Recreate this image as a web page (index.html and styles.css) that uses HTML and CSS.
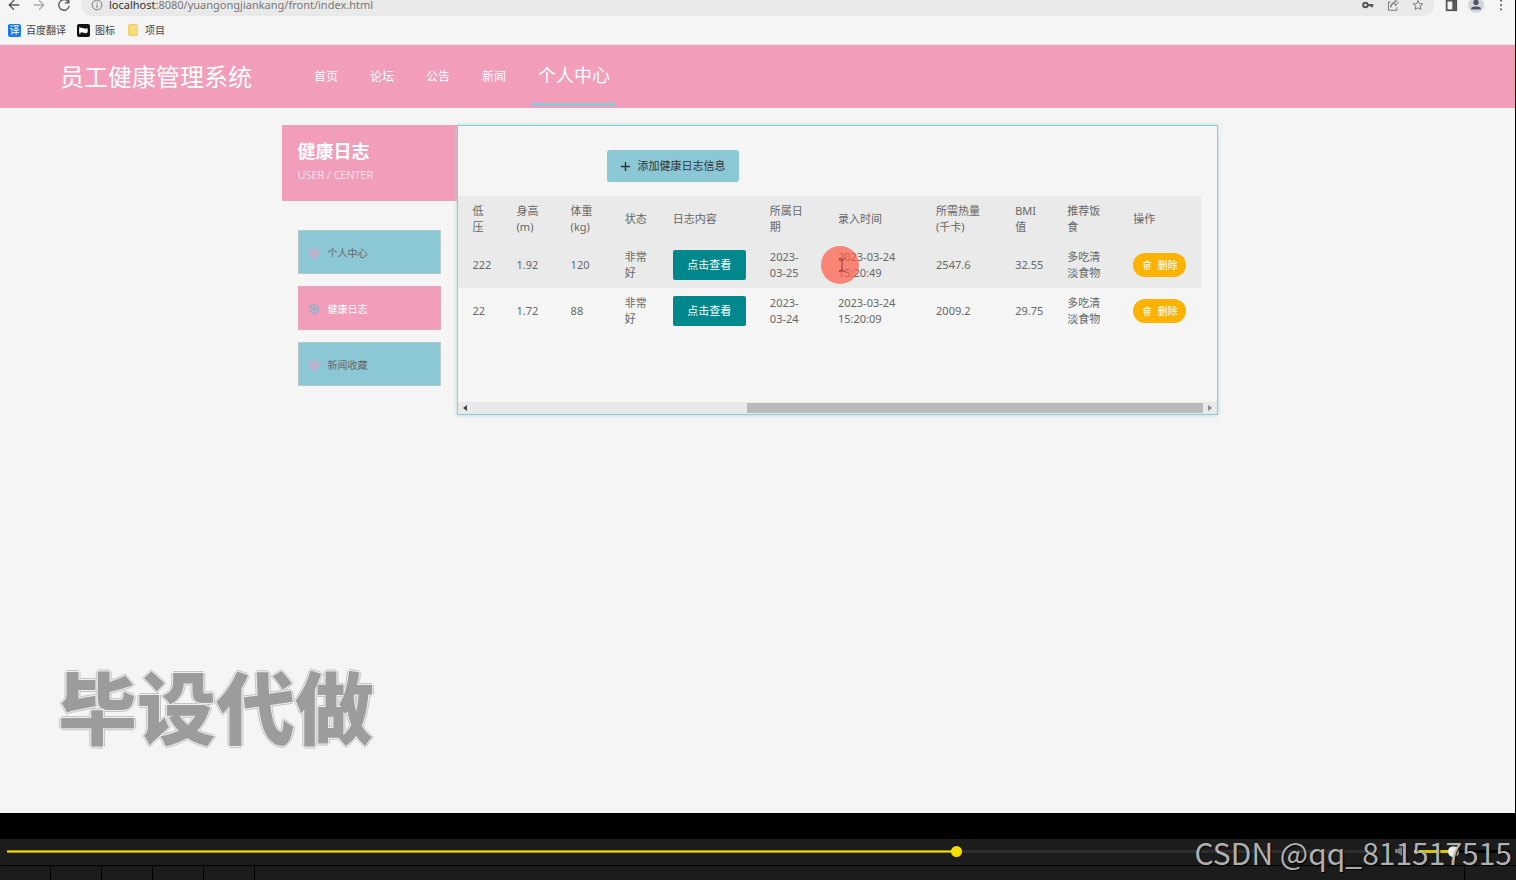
FILE: index.html
```html
<!DOCTYPE html>
<html lang="zh-CN">
<head>
    <meta charset="UTF-8">
    <meta name="viewport" content="width=device-width, initial-scale=1.0">
    <title>员工健康管理系统</title>
    <link rel="stylesheet" href="styles.css">
</head>
<body>
    <div class="screen">
        <div class="toolbar">
            <button class="tool" aria-label="后退"><svg viewBox="0 0 16 16"><path d="M14 8H3M8 2.500L2.500 8L8 13.500"/></svg></button>
            <button class="tool faded" aria-label="前进"><svg viewBox="0 0 16 16"><path d="M2 8H13M8 2.500L13.500 8L8 13.500"/></svg></button>
            <button class="tool" aria-label="刷新"><svg viewBox="0 0 16 16"><path d="M13 4.500A6 6 0 1 0 14 9M13.500 1V5.500H9"/></svg></button>
            <div class="address">
                <svg class="info" viewBox="0 0 16 16"><circle cx="8" cy="8" r="6.500"/><path d="M8 7V12M8 4V5.500"/></svg>
                <span class="url"><b>localhost</b>:8080/yuangongjiankang/front/index.html</span>
                <svg class="small" viewBox="0 0 16 16"><circle cx="4.500" cy="8" r="3" stroke-width="2.500"/><path d="M7.500 8H15M13.500 8V11M10.500 8V10" stroke-width="2.500"/></svg>
                <svg class="small" viewBox="0 0 16 16"><path d="M5 4H2V15H13V11M5 11C5.500 7.500 8 6 11 6V9L15 5L11 1V4C7 4.500 5 7 5 11Z"/></svg>
                <svg class="small" viewBox="0 0 16 16"><path d="M8 2L9.800 6.200L14.300 6.600L10.900 9.600L11.900 14L8 11.700L4.100 14L5.100 9.600L1.700 6.600L6.200 6.200Z"/></svg>
            </div>
            <button class="tool" aria-label="侧边栏"><svg viewBox="0 0 16 16"><rect x="3" y="3" width="11" height="11" stroke-width="2"/><path d="M11.500 3V14" stroke-width="4"/></svg></button>
            <button class="tool avatar" aria-label="用户"><svg viewBox="0 0 16 16"><circle cx="8" cy="5" r="3"/><path d="M2.500 13V11.500C3 9 13 9 13.500 11.500V13Z"/></svg></button>
            <button class="tool" aria-label="菜单"><svg viewBox="0 0 16 16"><path d="M8 2V4M8 7V9M8 12V14" stroke-width="2"/></svg></button>
        </div>
        <div class="bookmarks">
            <a href="#"><span class="fav blue">译</span>百度翻译</a>
            <a href="#"><span class="fav black"><svg viewBox="0 0 12 12"><path d="M2 2V10M2 4Q4 3 6 4T10 4V8Q8 9 6 8T2 8Z"/></svg></span>图标</a>
            <a href="#"><span class="fav folder"></span>项目</a>
        </div>
        <header class="navbar">
            <h1>员工健康管理系统</h1>
            <nav>
                <a href="#">首页</a>
                <a href="#">论坛</a>
                <a href="#">公告</a>
                <a href="#">新闻</a>
                <a href="#" class="active">个人中心</a>
            </nav>
        </header>
        <div class="content">
            <main>
                <aside>
                    <div class="side-title">
                        <h2>健康日志</h2>
                        <p>USER / CENTER</p>
                    </div>
                    <ul class="side-menu">
                        <li><a href="#"><svg viewBox="0 0 12 12"><path d="M6 0.500V11.500M1.200 3.200L10.800 8.800M10.800 3.200L1.200 8.800M4 1L6 3L8 1M4 11L6 9L8 11M0.700 5.500L3.300 4.600L2.700 1.900M11.300 5.500L8.700 4.600L9.300 1.900M0.700 6.500L3.300 7.400L2.700 10.100M11.300 6.500L8.700 7.400L9.300 10.100"/></svg>个人中心</a></li>
                        <li><a href="#" class="active"><svg viewBox="0 0 12 12"><path d="M6 0.500V11.500M1.200 3.200L10.800 8.800M10.800 3.200L1.200 8.800M4 1L6 3L8 1M4 11L6 9L8 11M0.700 5.500L3.300 4.600L2.700 1.900M11.300 5.500L8.700 4.600L9.300 1.900M0.700 6.500L3.300 7.400L2.700 10.100M11.300 6.500L8.700 7.400L9.300 10.100"/></svg>健康日志</a></li>
                        <li><a href="#"><svg viewBox="0 0 12 12"><path d="M6 0.500V11.500M1.200 3.200L10.800 8.800M10.800 3.200L1.200 8.800M4 1L6 3L8 1M4 11L6 9L8 11M0.700 5.500L3.300 4.600L2.700 1.900M11.300 5.500L8.700 4.600L9.300 1.900M0.700 6.500L3.300 7.400L2.700 10.100M11.300 6.500L8.700 7.400L9.300 10.100"/></svg>新闻收藏</a></li>
                    </ul>
                </aside>
                <section class="panel">
                    <button class="add"><svg viewBox="0 0 12 12"><path d="M6 1V11M1 6H11"/></svg>添加健康日志信息</button>
                    <div class="table-wrap">
                        <table>
                            <colgroup>
                                <col class="w44"><col class="w54"><col class="w54"><col class="w48"><col class="w97"><col class="w68"><col class="w98"><col class="w79"><col class="w52"><col class="w66"><col class="w82">
                            </colgroup>
                            <thead>
                                <tr>
                                    <th>低<br>压</th>
                                    <th>身高<br>(m)</th>
                                    <th>体重<br>(kg)</th>
                                    <th>状态</th>
                                    <th>日志内容</th>
                                    <th>所属日<br>期</th>
                                    <th>录入时间</th>
                                    <th>所需热量<br>(千卡)</th>
                                    <th>BMI<br>值</th>
                                    <th>推荐饭<br>食</th>
                                    <th>操作</th>
                                </tr>
                            </thead>
                            <tbody>
                                <tr class="hover">
                                    <td>222</td>
                                    <td>1.92</td>
                                    <td>120</td>
                                    <td>非常<br>好</td>
                                    <td><button class="view">点击查看</button></td>
                                    <td>2023-<br>03-25</td>
                                    <td class="pointed">2023-03-24<br>15:20:49
                                        <span class="pointer"><svg viewBox="0 0 10 16"><path d="M2 1.500Q5 1.500 5 3Q5 1.500 8 1.500M5 3V13M2 14.500Q5 14.500 5 13Q5 14.500 8 14.500"/></svg></span>
                                    </td>
                                    <td>2547.6</td>
                                    <td>32.55</td>
                                    <td>多吃清<br>淡食物</td>
                                    <td><button class="delete"><svg viewBox="0 0 12 12"><path d="M1 3H11M4 3V1.500H8V3M2.500 3L3 11H9L9.500 3M3 5.500H9M3 8H9M6 5V10"/></svg>删除</button></td>
                                </tr>
                                <tr>
                                    <td>22</td>
                                    <td>1.72</td>
                                    <td>88</td>
                                    <td>非常<br>好</td>
                                    <td><button class="view">点击查看</button></td>
                                    <td>2023-<br>03-24</td>
                                    <td>2023-03-24<br>15:20:09</td>
                                    <td>2009.2</td>
                                    <td>29.75</td>
                                    <td>多吃清<br>淡食物</td>
                                    <td><button class="delete"><svg viewBox="0 0 12 12"><path d="M1 3H11M4 3V1.500H8V3M2.500 3L3 11H9L9.500 3M3 5.500H9M3 8H9M6 5V10"/></svg>删除</button></td>
                                </tr>
                            </tbody>
                        </table>
                    </div>
                    <div class="scrollbar">
                        <span class="arrow left"></span>
                        <span class="thumb"></span>
                        <span class="arrow right"></span>
                    </div>
                </section>
            </main>
        </div>
        <div class="stamp">毕设代做</div>
    </div>
    <footer class="player">
        <div class="seek-row">
            <input type="range" class="seek" min="0" max="1000" value="693" aria-label="进度">
            <svg class="speaker" viewBox="0 0 12 12"><path d="M0 4H3L7 1V11L3 8H0Z"/><path d="M9 3V9M11 2V10" class="wave"/></svg>
            <input type="range" class="volume" min="0" max="100" value="40" aria-label="音量">
        </div>
        <div class="controls">
            <span></span><span></span><span></span><span></span><span></span>
            <span class="last"></span>
        </div>
        <div class="credit">CSDN @qq_811517515</div>
    </footer>
</body>
</html>
```
FILE: styles.css
```css
* {
    box-sizing: border-box;
}
body {
    margin: 0;
    min-height: 100vh;
    display: flex;
    flex-direction: column;
    background: #000;
    color: #666;
    font-family: "Noto Sans", "Noto Sans CJK SC", sans-serif;
    font-size: 11px;
    line-height: 16px;
}
a {
    color: inherit;
    text-decoration: none;
}
button {
    border: none;
    padding: 0;
    font: inherit;
    cursor: pointer;
}
svg {
    fill: none;
    stroke: currentColor;
    flex: none;
}
.screen {
    position: relative;
    flex: 1;
    background: #f5f5f5;
    border-right: 1px solid #000;
}

/* browser bars */
.toolbar {
    display: flex;
    align-items: center;
    gap: 9px;
    height: 16px;
    padding: 0 6px 6px;
    color: #555;
}
.tool {
    width: 16px;
    height: 16px;
    background: none;
    color: #555;
}
.tool svg {
    display: block;
    width: 14px;
    height: 14px;
    margin: auto;
    stroke-width: 1.5;
}
.faded {
    color: #aaa;
}
.avatar {
    background: #d4d6da;
    border-radius: 50%;
}
.avatar svg {
    fill: #4d5468;
    stroke: none;
}
.address {
    flex: 1;
    display: flex;
    align-items: center;
    gap: 13px;
    height: 22px;
    padding: 0 10px;
    border-radius: 11px;
    background: #e9e9e9;
}
.info {
    width: 12px;
    height: 12px;
    margin-right: -7px;
}
.small {
    width: 12px;
    height: 12px;
}
.url {
    flex: 1;
    font-size: 11px;
    line-height: 10px;
    color: #777;
}
.url b {
    font-weight: 400;
    color: #333;
}
.bookmarks {
    display: flex;
    align-items: center;
    gap: 11px;
    height: 29px;
    padding: 0 8px;
    border-bottom: 1px solid #e8e8e8;
    font-size: 10px;
    color: #444;
}
.bookmarks a {
    display: flex;
    align-items: center;
    gap: 5px;
}
.fav {
    display: flex;
    align-items: center;
    justify-content: center;
    width: 13px;
    height: 13px;
    border-radius: 2px;
    color: #fff;
}
.fav svg {
    width: 11px;
    height: 11px;
    fill: #fff;
}
.blue {
    background: #147aee;
}
.black {
    background: #111;
}
.folder {
    width: 10px;
    height: 12px;
    margin: 0 2px;
    background: #f8dc7c;
    border: 1px solid #efcf68;
}

/* site header */
.navbar {
    display: flex;
    align-items: center;
    gap: 56px;
    height: 63px;
    padding-left: 60px;
    background: #f29db9;
    color: #fff;
}
.navbar h1 {
    margin: 0;
    font-size: 24px;
    font-weight: 400;
    line-height: 32px;
}
nav {
    display: flex;
    align-items: center;
    gap: 20px;
    font-size: 12px;
}
nav a {
    padding: 0 6px;
    line-height: 55px;
}
nav .active {
    font-size: 18px;
    border-bottom: 3px solid #8ec6d5;
}

/* user center */
.content {
    padding: 17px 16px 0 0;
}
main {
    display: flex;
    align-items: flex-start;
    max-width: 936px;
    margin: 0 auto;
}
aside {
    width: 175px;
}
.side-title {
    height: 76px;
    padding: 14px 16px;
    background: #f29db9;
    color: #fff;
}
.side-title h2 {
    margin: 0;
    font-size: 18px;
    line-height: 24px;
}
.side-title p {
    margin: 4px 0 0;
    font-weight: 300;
}
.side-menu {
    list-style: none;
    display: flex;
    flex-direction: column;
    gap: 12px;
    margin: 0;
    padding: 29px 16px;
    font-size: 10px;
}
.side-menu a {
    display: flex;
    align-items: center;
    gap: 8px;
    height: 44px;
    padding: 1px 9px 0;
    border: 1px solid #b8c9c9;
    background: #8cc7d6;
    color: #666;
}
.side-menu svg {
    width: 12px;
    height: 12px;
    stroke-width: 0.8;
    color: #f29dc4;
}
.side-menu .active {
    border-color: #e8a7bb;
    background: #f29db9;
    color: #fff;
}
.side-menu .active svg {
    color: #6fb9d6;
}
.panel {
    flex: 1;
    min-width: 0;
    border: 1px solid #8ccdd4;
    box-shadow: 0 0 4px #a9d9de;
}
.add {
    display: flex;
    align-items: center;
    justify-content: center;
    gap: 7px;
    width: 132px;
    height: 32px;
    margin: 24px 0 14px 149px;
    border-radius: 3px;
    background: #8cc7d6;
    color: #333;
}
.add svg {
    width: 11px;
    height: 11px;
    stroke-width: 1.5;
}
.table-wrap {
    padding-right: 16px;
}
table {
    width: 100%;
    table-layout: fixed;
    border-collapse: collapse;
}
.w44 { width: 44px; }
.w48 { width: 48px; }
.w52 { width: 52px; }
.w54 { width: 54px; }
.w66 { width: 66px; }
.w68 { width: 68px; }
.w79 { width: 79px; }
.w82 { width: 82px; }
.w97 { width: 97px; }
.w98 { width: 98px; }
th, td {
    height: 46px;
    padding: 0 0 0 15px;
    font-weight: 400;
    text-align: left;
    white-space: nowrap;
}
thead, .hover {
    background: #eaeaea;
}
.view {
    display: block;
    width: 73px;
    height: 30px;
    border-radius: 2px;
    background: #00888c;
    color: #fff;
}
.delete {
    display: flex;
    align-items: center;
    justify-content: center;
    gap: 6px;
    width: 53px;
    height: 24px;
    border-radius: 12px;
    background: #fcb300;
    color: #fff;
    font-size: 10px;
}
.delete svg {
    width: 10px;
    height: 10px;
}
.pointed {
    position: relative;
}
.pointer {
    position: absolute;
    left: -2px;
    top: 4px;
    display: flex;
    align-items: center;
    justify-content: center;
    width: 38px;
    height: 38px;
    border-radius: 50%;
    background: rgba(255, 90, 70, 0.7);
    color: #933;
}
.pointer svg {
    width: 10px;
    height: 16px;
    margin-left: 4px;
}
.scrollbar {
    display: flex;
    align-items: center;
    height: 12px;
    margin-top: 68px;
    background: #e9e9e9;
}
.thumb {
    width: 60%;
    height: 10px;
    margin-left: auto;
    background: #b9b9b9;
}
.arrow {
    width: 14px;
}
.arrow::before {
    content: "";
    display: block;
    width: 0;
    margin: auto;
    border: 3px solid transparent;
}
.left::before {
    border-left: none;
    border-right: 4px solid #444;
}
.right::before {
    border-right: none;
    border-left: 4px solid #888;
}
.stamp {
    position: absolute;
    left: 58px;
    bottom: 60px;
    font-size: 79px;
    font-weight: 900;
    line-height: 88px;
    color: #9c9c9c;
    text-shadow: 1px 0 #eee, -1px 0 #eee, 0 1px #eee, 0 -1px #eee, 2px 0 #c4c4c4, -2px 0 #c4c4c4, 0 2px #c4c4c4, 0 -2px #c4c4c4;
}

/* video player */
.player {
    position: relative;
    margin-top: 26px;
    background: #1c1c1c;
}
.seek-row {
    display: flex;
    align-items: center;
    height: 27px;
    padding: 0 6px 2px 7px;
    border-bottom: 1px solid #000;
}
input[type="range"] {
    -webkit-appearance: none;
    appearance: none;
    height: 11px;
    margin: 0;
    background: none;
}
input::-webkit-slider-runnable-track {
    height: 3px;
}
input::-webkit-slider-thumb {
    -webkit-appearance: none;
    width: 11px;
    height: 11px;
    margin-top: -4px;
    border-radius: 50%;
    background: #f7e000;
}
.seek {
    flex: 1;
}
.seek::-webkit-slider-runnable-track {
    background: linear-gradient(#f7e000, #f7e000) 0 1px / 69% 1px no-repeat, linear-gradient(to right, #a09000 69%, #2e2e2e 69%);
}
.volume {
    width: 96px;
}
.volume::-webkit-slider-runnable-track {
    background: linear-gradient(to right, #d8c400 42%, #000 42%);
}
.volume::-webkit-slider-thumb {
    background: #eee;
}
.speaker {
    width: 12px;
    height: 12px;
    margin: 0 7px 0 15px;
    fill: #777;
    stroke: none;
}
.wave {
    stroke: #555;
}
.controls {
    display: flex;
    height: 14px;
}
.controls span {
    width: 51px;
    border-right: 1px solid #000;
}
.controls .last {
    width: 52px;
    margin-left: auto;
    border-right: none;
    border-left: 1px solid #000;
}
.credit {
    position: absolute;
    right: 4px;
    top: -5px;
    font-family: "Noto Sans CJK SC", sans-serif;
    font-size: 30px;
    line-height: 36px;
    color: rgba(200, 200, 200, 0.9);
    text-shadow: 1px 1px 1px #000;
}
```
